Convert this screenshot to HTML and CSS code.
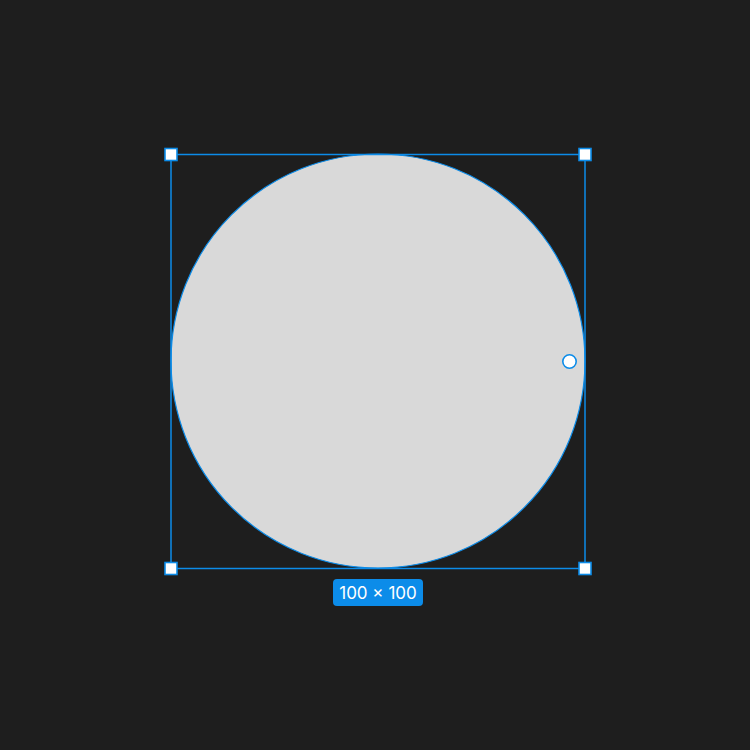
FILE: index.html
```html
<!DOCTYPE html>
<html>
<head>
<meta charset="utf-8">
<link rel="stylesheet" href="styles.css">
</head>
<body>
<div class="stage">
  <svg class="canvas" width="750" height="750" viewBox="0 0 750 750">
    <circle cx="378" cy="361" r="207" fill="#d9d9d9" stroke="#0c8ce9" stroke-width="1.2"/>
    <rect x="171" y="154.5" width="414" height="414" fill="none" stroke="#0c8ce9" stroke-width="1.5"/>
    <rect x="165" y="148.5" width="12" height="12" fill="#ffffff" stroke="#0c8ce9" stroke-width="1.6"/>
    <rect x="579" y="148.5" width="12" height="12" fill="#ffffff" stroke="#0c8ce9" stroke-width="1.6"/>
    <rect x="165" y="562.5" width="12" height="12" fill="#ffffff" stroke="#0c8ce9" stroke-width="1.6"/>
    <rect x="579" y="562.5" width="12" height="12" fill="#ffffff" stroke="#0c8ce9" stroke-width="1.6"/>
    <circle cx="569.5" cy="361.5" r="6.7" fill="#ffffff" stroke="#0c8ce9" stroke-width="1.6"/>
  </svg>
  <div class="size-label">100 × 100</div>
</div>
</body>
</html>
```
FILE: styles.css
```css
html, body {
  margin: 0;
  padding: 0;
  background: #1e1e1e;
}
.stage {
  position: relative;
  width: 750px;
  height: 750px;
  overflow: hidden;
}
.canvas {
  position: absolute;
  left: 0;
  top: 0;
}
.size-label {
  position: absolute;
  left: 333px;
  top: 579px;
  width: 90px;
  height: 27px;
  box-sizing: border-box;
  padding-top: 1px;
  background: #0c8ce9;
  color: #ffffff;
  border-radius: 4px;
  font-family: Inter, "Noto Sans", sans-serif;
  font-size: 17px;
  line-height: 26px;
  text-align: center;
}
```
